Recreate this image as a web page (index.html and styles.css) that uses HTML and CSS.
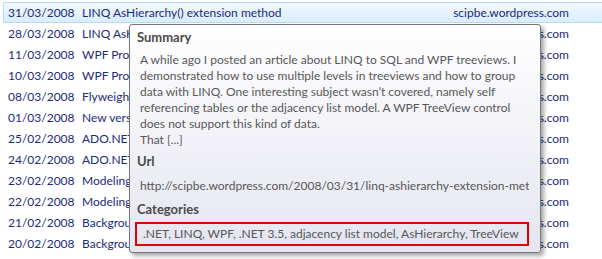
FILE: index.html
```html
<!DOCTYPE html>
<html>
<head>
<meta charset="utf-8">
<link rel="stylesheet" href="styles.css">
</head>
<body>
<div class="list">
  <div class="row selected"><span class="date">31/03/2008</span><span class="title">LINQ AsHierarchy() extension method</span><span class="site">scipbe.wordpress.com</span></div>
  <div class="row"><span class="date">28/03/2008</span><span class="title">LINQ AsHierarchy</span><span class="site">scipbe.wordpress.com</span></div>
  <div class="row"><span class="date">11/03/2008</span><span class="title">WPF Productivity</span><span class="site">scipbe.wordpress.com</span></div>
  <div class="row"><span class="date">10/03/2008</span><span class="title">WPF Productivity</span><span class="site">scipbe.wordpress.com</span></div>
  <div class="row"><span class="date">08/03/2008</span><span class="title">Flyweight pattern</span><span class="site">scipbe.wordpress.com</span></div>
  <div class="row"><span class="date">01/03/2008</span><span class="title">New version</span><span class="site">scipbe.wordpress.com</span></div>
  <div class="row"><span class="date">25/02/2008</span><span class="title">ADO.NET Entity</span><span class="site">scipbe.wordpress.com</span></div>
  <div class="row"><span class="date">24/02/2008</span><span class="title">ADO.NET Entity</span><span class="site">scipbe.wordpress.com</span></div>
  <div class="row"><span class="date">23/02/2008</span><span class="title">Modeling</span><span class="site">scipbe.wordpress.com</span></div>
  <div class="row"><span class="date">22/02/2008</span><span class="title">Modeling</span><span class="site">scipbe.wordpress.com</span></div>
  <div class="row"><span class="date">21/02/2008</span><span class="title">Background</span><span class="site">scipbe.wordpress.com</span></div>
  <div class="row"><span class="date">20/02/2008</span><span class="title">Background</span><span class="site">scipbe.wordpress.com</span></div>
</div>
<div class="tooltip">
  <div class="head">Summary</div>
  <div class="text summary">A while ago I posted an article about LINQ to SQL and WPF treeviews. I<br>demonstrated how to use multiple levels in treeviews and how to group<br>data with LINQ. One interesting subject wasn’t covered, namely self<br>referencing tables or the adjacency list model. A WPF TreeView control<br>does not support this kind of data.<br>That [...]</div>
  <div class="head url-head">Url</div>
  <div class="text url">http://scipbe.wordpress.com/2008/03/31/linq-ashierarchy-extension-method/</div>
  <div class="head cat-head">Categories</div>
  <div class="cats">.NET, LINQ, WPF, .NET 3.5, adjacency list model, AsHierarchy, TreeView</div>
</div>
</body>
</html>
```
FILE: styles.css
```css
html, body {
  margin: 0;
  padding: 0;
  background: #ffffff;
}
body {
  font-family: "Lato", "Noto Sans", sans-serif;
  font-size: 12px;
  width: 602px;
  height: 259px;
  overflow: hidden;
  position: relative;
}
.list {
  padding-top: 2px;
  padding-left: 3px;
  display: flex;
  flex-direction: column;
}
.row {
  display: flex;
  align-items: center;
  height: 21px;
  color: #1c2a7a;
  border: 1px solid transparent;
  border-right: none;
  box-sizing: border-box;
}
.row.selected {
  background: linear-gradient(#f1f8fd, #d9eefb);
  border-color: #b5dcf3;
  border-radius: 2px 0 0 2px;
}
.date {
  padding-left: 4px;
  width: 74px;
  flex: none;
}
.title {
  flex: 1;
}
.site {
  padding-right: 33px;
}
.tooltip {
  position: absolute;
  left: 129px;
  top: 24px;
  width: 412px;
  height: 229px;
  box-sizing: border-box;
  border: 1px solid #767676;
  border-radius: 3px;
  background: linear-gradient(#ffffff, #e4e5f0);
  box-shadow: 3px 3px 4px rgba(0, 0, 0, 0.35);
  padding: 2px 11px 0 7px;
  color: #575757;
}
.head {
  font-weight: bold;
  font-size: 13px;
  line-height: 20px;
  color: #4a4a4a;
}
.text {
  margin-left: 3px;
  line-height: 16px;
  white-space: nowrap;
}
.summary {
  margin-top: 5px;
}
.url-head {
  margin-top: 3px;
}
.url {
  margin-top: 7px;
  overflow: hidden;
}
.cat-head {
  margin-top: 5px;
}
.cats {
  margin: 3px 0 0 -2px;
  height: 24px;
  box-sizing: border-box;
  border: 2px solid #e40000;
  padding-left: 6px;
  line-height: 20px;
  white-space: nowrap;
}
```
